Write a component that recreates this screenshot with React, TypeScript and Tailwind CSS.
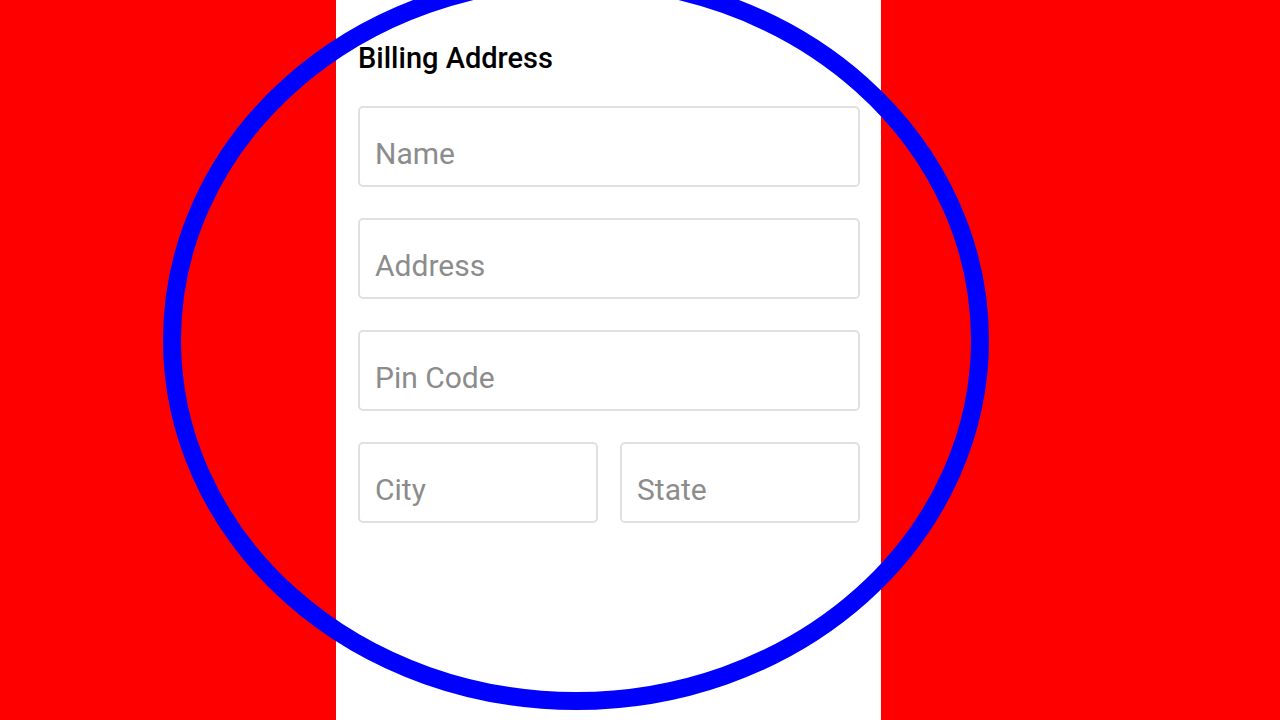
import React from "react"

const fields = ["Name", "Address", "Pin Code"]

function Field({ label, className = "" }: { label: string; className?: string }) {
  return (
    <input
      placeholder={label}
      className={
        "h-[81px] rounded-[5px] border-2 border-[#e0e0e0] bg-white px-[15px] pt-[13px] text-[30px] text-[#333] outline-none placeholder:text-[#8c8c8c] " +
        className
      }
    />
  )
}

export default function App() {
  return (
    <div className="relative flex h-[720px] w-full overflow-hidden bg-[#ff0000] font-['Roboto',sans-serif]">
      <div className="w-[336px] shrink-0" />
      <div className="flex w-[545px] shrink-0 flex-col bg-white pl-[22px] pr-[21px] pt-[40px]">
        <h2 className="text-[29px] font-medium leading-[36px] text-black">Billing Address</h2>
        <div className="mt-[30px] flex flex-col gap-[31px]">
          {fields.map((f) => (
            <Field key={f} label={f} className="w-full" />
          ))}
          <div className="flex gap-[22px]">
            <Field label="City" className="w-[240px] min-w-0" />
            <Field label="State" className="w-[240px] min-w-0" />
          </div>
        </div>
      </div>

      {/* highlight ring drawn over the form */}
      <svg className="pointer-events-none absolute inset-0" width="1280" height="720" viewBox="0 0 1280 720">
        <ellipse cx="576" cy="340" rx="404" ry="361" fill="none" stroke="#0000ff" strokeWidth="18" />
      </svg>
    </div>
  )
}
